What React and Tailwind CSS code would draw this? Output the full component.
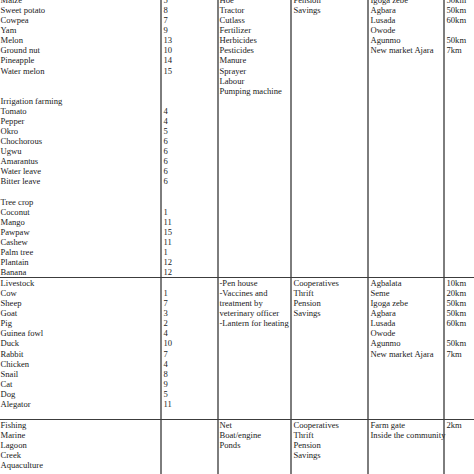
import React from "react";

const sections = [
  {
    h: "h-[282px]",
    border: "",
    cols: [
      ["Maize", "Sweet potato", "Cowpea", "Yam", "Melon", "Ground nut", "Pineapple", "Water melon", "", "", "Irrigation farming", "Tomato", "Pepper", "Okro", "Chochorous", "Ugwu", "Amarantus", "Water leave", "Bitter leave", "", "Tree crop", "Coconut", "Mango", "Pawpaw", "Cashew", "Palm tree", "Plantain", "Banana"],
      ["5", "8", "7", "9", "13", "10", "14", "15", "", "", "", "4", "4", "5", "6", "6", "6", "6", "6", "", "", "1", "11", "15", "11", "1", "12", "12"],
      ["Hoe", "Tractor", "Cutlass", "Fertilizer", "Herbicides", "Pesticides", "Manure", "Sprayer", "Labour", "Pumping machine"],
      ["Pension", "Savings"],
      ["Igoga zebe", "Agbara", "Lusada", "Owode", "Agunmo", "New market Ajara"],
      ["50km", "50km", "60km", "", "50km", "7km"],
    ],
  },
  {
    h: "h-[142px]",
    border: "border-t border-[#3c3c3c]",
    cols: [
      ["Livestock", "Cow", "Sheep", "Goat", "Pig", "Guinea fowl", "Duck", "Rabbit", "Chicken", "Snail", "Cat", "Dog", "Alegator"],
      ["", "1", "7", "3", "2", "4", "10", "7", "4", "8", "9", "5", "11"],
      ["-Pen house", "-Vaccines and", "treatment by", "veterinary officer", "-Lantern for heating"],
      ["Cooperatives", "Thrift", "Pension", "Savings"],
      ["Agbalata", "Seme", "Igoga zebe", "Agbara", "Lusada", "Owode", "Agunmo", "New market Ajara"],
      ["10km", "20km", "50km", "50km", "60km", "", "50km", "7km"],
    ],
  },
  {
    h: "h-[80px]",
    border: "border-t border-[#3c3c3c]",
    cols: [
      ["Fishing", "Marine", "Lagoon", "Creek", "Aquaculture"],
      [],
      ["Net", "Boat/engine", "Ponds"],
      ["Cooperatives", "Thrift", "Pension", "Savings"],
      ["Farm gate", "Inside the community"],
      ["2km"],
    ],
  },
];

const cellCls = [
  "pl-[0.5px] border-r-2 border-[#7d7d7d]",
  "pl-[1.5px] border-r-2 border-[#7d7d7d]",
  "pl-[0.5px] border-r-2 border-[#7d7d7d]",
  "pl-[1.5px] border-r-2 border-[#7d7d7d]",
  "pl-[1.5px] border-r-2 border-[#7d7d7d]",
  "pl-[1.5px]",
];

export default function App() {
  return (
    <div className="w-[474px] h-[474px] overflow-hidden bg-white">
      <div
        className="-mt-[5px] text-[8.6px] leading-[10.08px] text-[#1a1a1a] whitespace-nowrap"
        style={{ fontFamily: '"Liberation Serif", "Times New Roman", serif' }}
      >
        {sections.map((s, i) => (
          <div
            key={i}
            className={`grid grid-cols-[162px_57px_73px_77px_76px_1fr] ${s.h} ${s.border}`}
          >
            {s.cols.map((lines, j) => (
              <div key={j} className={`flex flex-col ${cellCls[j]}`}>
                {lines.map((t, k) => (
                  <div key={k}>{t === "" ? "\u00a0" : t}</div>
                ))}
              </div>
            ))}
          </div>
        ))}
      </div>
    </div>
  );
}
